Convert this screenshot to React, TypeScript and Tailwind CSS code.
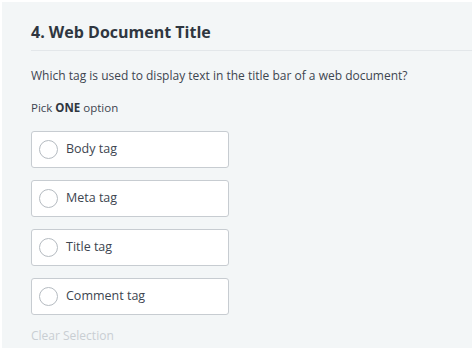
import React from "react";

const options = ["Body tag", "Meta tag", "Title tag", "Comment tag"];

export default function App() {
  return (
    <div className="w-[474px] h-[353px] bg-white p-[2px]" style={{ fontFamily: '"Open Sans", sans-serif' }}>
      <div className="w-[470px] h-[346px] bg-[#f3f6f7] pl-[29px] pt-[18px]">
        <h1 className="text-[16px] leading-[24px] font-bold text-[#2f3640]">4. Web Document Title</h1>
        <div className="mt-[6px] h-px bg-[#e3e7ea]" />
        <p className="mt-[16px] text-[12px] leading-[18px] text-[#3d4550]">
          Which tag is used to display text in the title bar of a web document?
        </p>
        <p className="mt-[15px] text-[11.5px] leading-[16px] text-[#3d4550]">
          Pick <span className="font-bold text-[#2f3640]">ONE</span> option
        </p>
        <div className="mt-[15px] flex flex-col gap-[12px]">
          {options.map((o) => (
            <div
              key={o}
              className="w-[198px] h-[37px] bg-white border border-[#c7ccd1] rounded-[3px] flex items-center pl-[7px] gap-[8px]"
            >
              <span className="w-[19px] h-[19px] rounded-full border border-[#b5bbc1] bg-white" />
              <span className="text-[12.5px] text-[#3d4550]">{o}</span>
            </div>
          ))}
        </div>
        <div className="mt-[13px] text-[12px] leading-[16px] text-[#c9ced3]">Clear Selection</div>
      </div>
    </div>
  );
}
